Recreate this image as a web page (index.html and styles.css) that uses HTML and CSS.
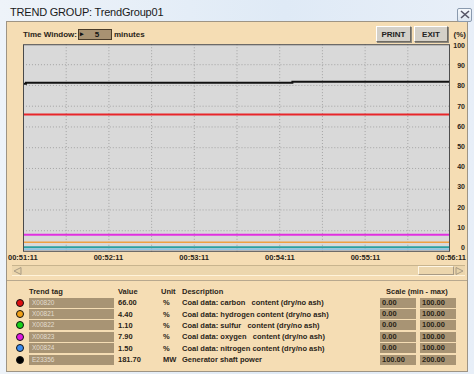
FILE: index.html
```html
<!DOCTYPE html>
<html lang="en">
<head>
    <meta charset="UTF-8">
    <title>TREND GROUP: TrendGroup01</title>
    <link rel="stylesheet" href="styles.css">
</head>
<body>
    <div class="window">
        <div class="titlebar">
            <span class="title">TREND GROUP: TrendGroup01</span>
            <span class="close">
                <svg width="10" height="9" viewBox="0 0 10 9"><path d="M1 1L9 8M9 1L1 8" stroke="#556" stroke-width="1.6"/></svg>
            </span>
        </div>
        <div class="panel">
            <div class="toolbar">
                <span class="label">Time Window:</span>
                <span class="timebox"><span class="tri">&#9656;</span><span class="num">5</span></span>
                <span class="label">minutes</span>
                <span class="spacer"></span>
                <button class="btn">PRINT</button>
                <button class="btn">EXIT</button>
                <span class="unit-pct">(%)</span>
            </div>
            <div class="chart">
                <svg class="plot" width="428" height="208" viewBox="0 0 428 208">
                    <rect x="0" y="0" width="428" height="208" fill="#d9d9d9"/>
                    <g stroke="#a4a4a4" stroke-width="1" stroke-dasharray="1 2">
                        <path d="M43.3 0V208M86.1 0V208M128.9 0V208M171.7 0V208M214.5 0V208M257.3 0V208M300.1 0V208M342.9 0V208M385.7 0V208"/>
                        <path d="M0 20.5H428M0 41.3H428M0 62.1H428M0 82.9H428M0 103.7H428M0 124.5H428M0 145.3H428M0 166.1H428M0 186.9H428"/>
                    </g>
                    <path d="M0 39.5H3V38.5H270V37.5H428" stroke="#111" stroke-width="2" fill="none"/>
                    <line x1="0" y1="70.5" x2="428" y2="70.5" stroke="#e8262a" stroke-width="2"/>
                    <line x1="0" y1="191" x2="428" y2="191" stroke="#e030e0" stroke-width="2"/>
                    <line x1="0" y1="198.5" x2="428" y2="198.5" stroke="#f0a040" stroke-width="1.5"/>
                    <line x1="0" y1="203.5" x2="428" y2="203.5" stroke="#2aa0a0" stroke-width="2"/>
                    <line x1="0" y1="205.5" x2="428" y2="205.5" stroke="#8cc4e6" stroke-width="1.5"/>
                    <rect x="0.5" y="0.5" width="427" height="207" fill="none" stroke="#4a4a4a"/>
                </svg>
                <div class="yaxis">
                    <span>100</span><span>90</span><span>80</span><span>70</span><span>60</span><span>50</span><span>40</span><span>30</span><span>20</span><span>10</span><span>0</span>
                </div>
            </div>
            <div class="times">
                <span>00:51:11</span><span>00:52:11</span><span>00:53:11</span><span>00:54:11</span><span>00:55:11</span><span>00:56:11</span>
            </div>
            <div class="scrollbar">
                <span class="arrow left">
                    <svg width="9" height="8" viewBox="0 0 9 8"><path d="M8 0.5V7.5L1 4Z" fill="#e6d2a8" stroke="#a89a84"/></svg>
                </span>
                <span class="track"></span>
                <span class="thumb"></span>
                <span class="arrow right">
                    <svg width="9" height="8" viewBox="0 0 9 8"><path d="M1 0.5V7.5L8 4Z" fill="#e6d2a8" stroke="#a89a84"/></svg>
                </span>
            </div>
            <div class="legend">
                <div class="row head">
                    <span></span>
                    <span class="h-tag">Trend tag</span>
                    <span class="val">Value</span>
                    <span>Unit</span>
                    <span>Description</span>
                    <span class="h-scale">Scale (min - max)</span>
                </div>
                <div class="row">
                    <span class="dot red"></span>
                    <span class="tag">X00820</span>
                    <span class="val">66.00</span>
                    <span class="unit">%</span>
                    <span>Coal data: carbon&nbsp;&nbsp; content (dry/no ash)</span>
                    <span class="box">0.00</span>
                    <span class="box">100.00</span>
                </div>
                <div class="row">
                    <span class="dot orange"></span>
                    <span class="tag">X00821</span>
                    <span class="val">4.40</span>
                    <span class="unit">%</span>
                    <span>Coal data: hydrogen content (dry/no ash)</span>
                    <span class="box">0.00</span>
                    <span class="box">100.00</span>
                </div>
                <div class="row">
                    <span class="dot green"></span>
                    <span class="tag">X00822</span>
                    <span class="val">1.10</span>
                    <span class="unit">%</span>
                    <span>Coal data: sulfur&nbsp;&nbsp; content (dry/no ash)</span>
                    <span class="box">0.00</span>
                    <span class="box">100.00</span>
                </div>
                <div class="row">
                    <span class="dot magenta"></span>
                    <span class="tag">X00823</span>
                    <span class="val">7.90</span>
                    <span class="unit">%</span>
                    <span>Coal data: oxygen&nbsp;&nbsp; content (dry/no ash)</span>
                    <span class="box">0.00</span>
                    <span class="box">100.00</span>
                </div>
                <div class="row">
                    <span class="dot blue"></span>
                    <span class="tag">X00824</span>
                    <span class="val">1.50</span>
                    <span class="unit">%</span>
                    <span>Coal data: nitrogen content (dry/no ash)</span>
                    <span class="box">0.00</span>
                    <span class="box">100.00</span>
                </div>
                <div class="row">
                    <span class="dot black"></span>
                    <span class="tag">E23356</span>
                    <span class="val">181.70</span>
                    <span class="unit">MW</span>
                    <span>Generator shaft power</span>
                    <span class="box">100.00</span>
                    <span class="box">200.00</span>
                </div>
            </div>
        </div>
    </div>
</body>
</html>
```

FILE: styles.css
```css
*{
    box-sizing:border-box;
}
body{
    margin:0;
    width:474px;
    height:374px;
    overflow:hidden;
    background:linear-gradient(to right,#eef3f9,#dfeaf6 60%,#e8eff8);
    font-family:"Liberation Sans", Arial, sans-serif;
}
.window{
    padding:0 6px 0 6px;
}
.titlebar{
    height:21px;
    display:flex;
    align-items:center;
    justify-content:space-between;
    padding-left:4px;
}
.title{
    font-family:"Liberation Sans", Arial, sans-serif;
    font-size:11px;
    color:#1a1a1a;
    letter-spacing:-0.2px;
    margin-top:2px;
}
.close{
    width:15px;
    height:14px;
    margin-top:8px;
    margin-right:-4px;
    border:1px solid #8a9aae;
    border-radius:2px;
    background:linear-gradient(#f6f9fc,#dde6f0);
    display:flex;
    align-items:center;
    justify-content:center;
}
.panel{
    width:462px;
    height:351px;
    background:#f5ddb4;
    border:1px solid #9e9484;
    font-size:8px;
    font-weight:bold;
    color:#2a2418;
}
.toolbar{
    height:22px;
    display:flex;
    align-items:center;
    padding-left:16px;
    padding-top:2px;
}
.label{
    font-size:8px;
}
.timebox{
    width:34px;
    height:11px;
    margin:0 2px 0 1px;
    background:#a89272;
    border:1px solid #4a3c2a;
    display:flex;
    align-items:center;
    font-size:8px;
    color:#111;
}
.tri{
    font-size:7px;
    margin-left:1px;
    width:13px;
}
.num{
    width:8px;
    text-align:center;
}
.spacer{
    flex:1;
}
.btn{
    height:16px;
    padding:0;
    margin-left:3px;
    font-family:"Liberation Sans", Arial, sans-serif;
    font-size:8px;
    font-weight:bold;
    color:#222;
    background:#d4d0c8;
    border:1px solid;
    border-color:#fff #6e6a62 #6e6a62 #fff;
    box-shadow:1px 1px 0 #8c887f;
}
.btn:first-of-type{
    width:35px;
}
.btn:last-of-type{
    width:34px;
}
.unit-pct{
    width:17px;
    margin-left:2px;
    text-align:right;
    padding-right:1px;
}
.chart{
    display:flex;
    padding-left:16px;
}
.plot{
    display:block;
}
.yaxis{
    width:17px;
    height:210px;
    margin-top:-2px;
    display:flex;
    flex-direction:column;
    justify-content:space-between;
    align-items:flex-end;
    padding-right:2px;
    font-size:7px;
    line-height:8px;
}
.times{
    display:flex;
    justify-content:space-between;
    padding:1px 1px 0 1px;
    font-size:7.5px;
    height:11px;
}
.scrollbar{
    height:11px;
    margin:2px 2px 0 5px;
    display:flex;
    align-items:stretch;
    background:#ecd6ad;
    border-top:1px solid #c8b48e;
    border-bottom:1px solid #fff3da;
}
.arrow{
    width:11px;
    display:flex;
    align-items:center;
    justify-content:center;
}
.track{
    flex:1;
}
.thumb{
    width:36px;
    background:#ecd6ad;
    border:1px solid;
    border-color:#fff6e4 #a89a84 #a89a84 #fff6e4;
}
.legend{
    margin-top:4px;
    border-top:1px solid #b8a88e;
    padding:4px 0 0 8px;
}
.row{
    display:grid;
    grid-template-columns:14px 85px 47px 21px 198px 36px 40px;
    height:11.4px;
    align-items:center;
    font-size:7.5px;
    white-space:nowrap;
}
.row .box{
    width:36px;
}
.row .box + .box{
    margin-left:4px;
}
.head{
    height:12px;
}
.h-tag{
    padding-left:0;
}
.val{
    padding-left:4px;
}
.h-scale{
    grid-column:6 / span 2;
    padding-left:6px;
}
.dot{
    width:8px;
    height:8px;
    border-radius:50%;
    border:1px solid #111;
    margin-left:1px;
}
.red{ background:#e01010; }
.orange{ background:#f0a018; }
.green{ background:#18d018; }
.magenta{ background:#e018e0; }
.blue{ background:#3c8cf0; }
.black{ background:#000; }
.tag{
    height:10px;
    width:85px;
    background:#a89474;
    color:#e2dccf;
    font-weight:normal;
    font-size:6.5px;
    line-height:10px;
    padding-left:3px;
}
.unit{
    padding-left:2px;
}
.box{
    height:10px;
    background:#a89474;
    line-height:10px;
    padding-left:2px;
}
```
